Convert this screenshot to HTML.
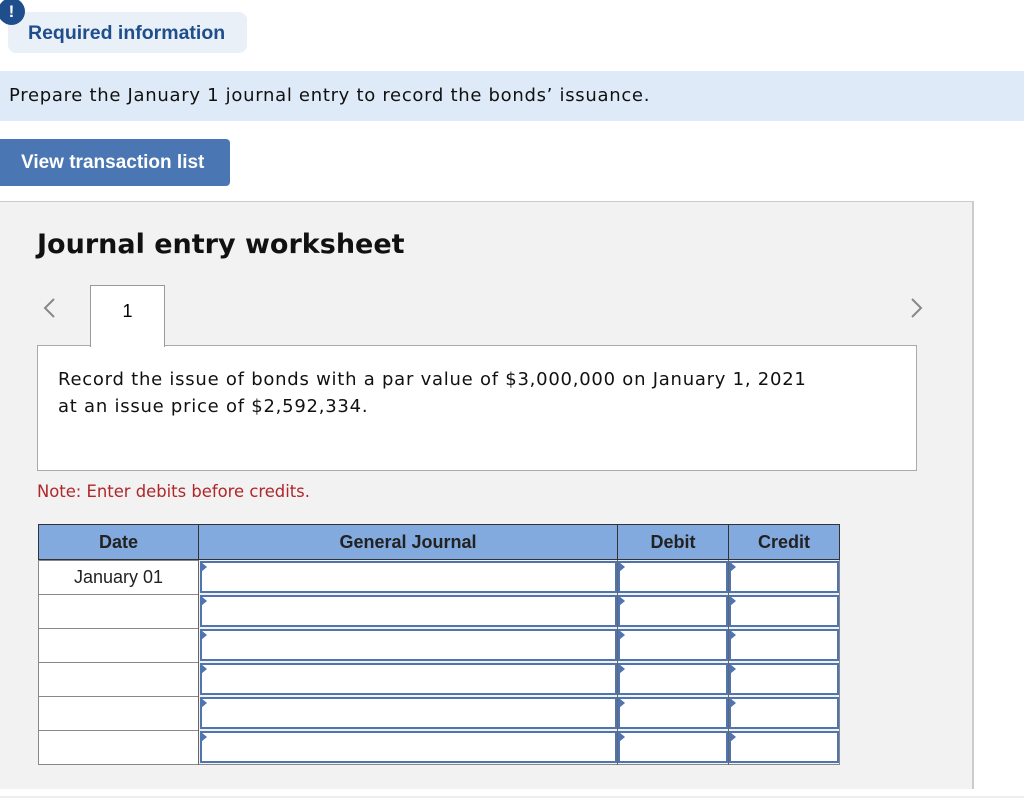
<!DOCTYPE html>
<html><head><style>
body{margin:0;width:1024px;height:805px;background:#fff;font-family:"DejaVu Sans","Liberation Sans",sans-serif;position:relative;overflow:hidden}
.abs{position:absolute}
.req{left:8px;top:12px;width:239px;height:41px;background:#eaf0f7;border-radius:8px;color:#1f4e8c;font-family:"Liberation Sans",sans-serif;font-weight:bold;font-size:19.5px;line-height:42px;padding-left:20px;box-sizing:border-box}
.bang{left:-2px;top:-2px;width:27px;height:27px;border-radius:50%;background:#1f4e8c;color:#fff;font-weight:bold;font-family:"Liberation Sans",sans-serif;font-size:17px;text-align:center;line-height:27px}
.band{left:0;top:71px;width:1024px;height:50px;background:#deeaf7;font-size:18px;letter-spacing:0.7px;line-height:50px;padding-left:9px;box-sizing:border-box;color:#111}
.btn{left:0;top:139px;width:230px;height:47px;background:#4a76b3;border-radius:0 4px 4px 0;color:#fff;font-family:"Liberation Sans",sans-serif;font-weight:bold;font-size:19px;line-height:47px;padding-left:21px;box-sizing:border-box}
.panel{left:0;top:201px;width:974px;height:588px;background:#f2f2f2;border-top:1px solid #ccc;border-right:2px solid #ccc;box-sizing:border-box}
h1{position:absolute;left:37px;top:229px;margin:0;font-size:27px;font-weight:bold;color:#111}
.tab{left:90px;top:285px;width:75px;height:62px;background:#fff;border:1px solid #999;border-bottom:none;box-sizing:border-box;text-align:center;font-family:"Liberation Sans",sans-serif;font-size:18px;line-height:50px;z-index:2}
.box{left:37px;top:345px;width:880px;height:126px;background:#fff;border:1px solid #aaa;box-sizing:border-box;padding:20px 20px;font-size:18px;letter-spacing:0.75px;line-height:27px;color:#111}
.note{left:37px;top:482px;color:#b0262a;font-size:16.4px}
.th{position:absolute;top:524px;height:36px;background:#82aadf;border:1px solid #333;box-sizing:border-box;font-family:"Liberation Sans",sans-serif;font-weight:bold;font-size:18px;color:#222;text-align:center;line-height:34px}
.d{position:absolute;left:38px;width:161px;height:35px;background:#fff;border:1px solid #888;box-sizing:border-box;font-family:"Liberation Sans",sans-serif;font-size:18px;color:#222;text-align:center;line-height:33px}
.in{position:absolute;height:32px;border:2px solid #4f74b0;background:#fff;box-sizing:border-box}
.in:before{content:"";position:absolute;left:-1px;top:-1px;border-top:5px solid transparent;border-bottom:5px solid transparent;border-left:6px solid #4f74b0}
</style></head><body>
<div class="abs req">Required information</div>
<div class="abs bang">!</div>
<div class="abs band">Prepare the January 1 journal entry to record the bonds’ issuance.</div>
<div class="abs btn">View transaction list</div>
<div class="abs panel"></div>
<div class="abs" style="left:0;top:796px;width:1024px;height:2px;background:#eee"></div>
<h1>Journal entry worksheet</h1>
<svg class="abs" style="left:40px;top:296px" width="20" height="24"><path d="M14 3 L5 12 L14 21" fill="none" stroke="#888" stroke-width="2"/></svg>
<svg class="abs" style="left:906px;top:296px" width="20" height="24"><path d="M6 3 L15 12 L6 21" fill="none" stroke="#888" stroke-width="2"/></svg>
<div class="abs tab">1</div>
<div class="abs box">Record the issue of bonds with a par value of $3,000,000 on January 1, 2021<br>at an issue price of $2,592,334.</div>
<div class="abs note">Note: Enter debits before credits.</div>
<div class="abs" style="left:38px;top:524px;width:802px;height:241px;background:#f2f2f2;border-right:1px solid #888;border-bottom:1px solid #888;box-sizing:border-box"></div>
<div class="th" style="left:38px;width:161px">Date</div>
<div class="th" style="left:198px;width:420px">General Journal</div>
<div class="th" style="left:617px;width:112px">Debit</div>
<div class="th" style="left:728px;width:112px">Credit</div>
<div class="d" style="top:560px">January 01</div>
<div class="d" style="top:594px"></div>
<div class="d" style="top:628px"></div>
<div class="d" style="top:662px"></div>
<div class="d" style="top:696px"></div>
<div class="d" style="top:730px"></div>
<div class="abs" style="left:198px;top:560px;width:1px;height:205px;background:#666"></div>
<div class="abs" style="left:617px;top:560px;width:1px;height:205px;background:#666"></div>
<div class="abs" style="left:728px;top:560px;width:1px;height:205px;background:#666"></div>
<div class="in" style="left:200px;top:561px;width:417px"></div><div class="in" style="left:618px;top:561px;width:110px"></div><div class="in" style="left:729px;top:561px;width:110px"></div>
<div class="in" style="left:200px;top:595px;width:417px"></div><div class="in" style="left:618px;top:595px;width:110px"></div><div class="in" style="left:729px;top:595px;width:110px"></div>
<div class="in" style="left:200px;top:629px;width:417px"></div><div class="in" style="left:618px;top:629px;width:110px"></div><div class="in" style="left:729px;top:629px;width:110px"></div>
<div class="in" style="left:200px;top:663px;width:417px"></div><div class="in" style="left:618px;top:663px;width:110px"></div><div class="in" style="left:729px;top:663px;width:110px"></div>
<div class="in" style="left:200px;top:697px;width:417px"></div><div class="in" style="left:618px;top:697px;width:110px"></div><div class="in" style="left:729px;top:697px;width:110px"></div>
<div class="in" style="left:200px;top:731px;width:417px"></div><div class="in" style="left:618px;top:731px;width:110px"></div><div class="in" style="left:729px;top:731px;width:110px"></div>
</body></html>
